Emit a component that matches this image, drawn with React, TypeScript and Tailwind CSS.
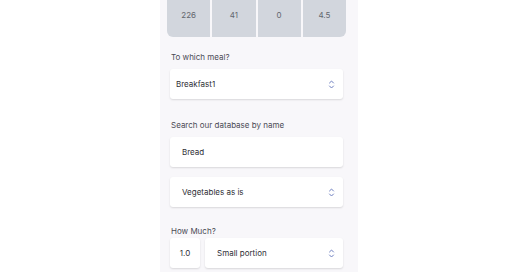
import { useState } from 'react';

const stats = ['226', '41', '0', '4.5'];

const Chevrons = () => (
  <svg width="7" height="11" viewBox="0 0 7 11" fill="none" className="shrink-0">
    <path d="M1.5 4 L3.5 2 L5.5 4" stroke="#6f80c0" strokeWidth="1" strokeLinecap="round" strokeLinejoin="round" />
    <path d="M1.5 7 L3.5 9 L5.5 7" stroke="#6f80c0" strokeWidth="1" strokeLinecap="round" strokeLinejoin="round" />
  </svg>
);

const Box = ({ children, className = '' }: { children: React.ReactNode; className?: string }) => (
  <div className={`flex h-[30px] items-center rounded-[3px] bg-white shadow-[0_1px_2px_rgba(0,0,0,0.13)] ${className}`}>
    {children}
  </div>
);

const Label = ({ text }: { text: string }) => (
  <div className="px-[1px] text-[8px] leading-none text-[#4b4b55]">{text}</div>
);

export default function App() {
  const [search] = useState('Bread');

  return (
    <div className="flex h-[272px] w-[518px] justify-center overflow-hidden bg-white font-['Inter',sans-serif]">
      <div className="flex w-[198px] flex-col bg-[#f8f7fa] pl-[10px] pr-[15px]">
        <div className="-mx-[3px] grid grid-cols-4 gap-[2px] overflow-hidden rounded-b-[6px]">
          {stats.map((s) => (
            <div key={s} className="flex h-[37px] items-center justify-center bg-[#d2d6dd] pb-[7px] text-[8px] text-[#63666e]">
              {s}
            </div>
          ))}
        </div>

        <div className="mt-[16px]">
          <Label text="To which meal?" />
        </div>
        <Box className="mt-[8px] justify-between pl-[6px] pr-[8px]">
          <span className="text-[8px] text-[#2f2f36]">Breakfast1</span>
          <Chevrons />
        </Box>

        <div className="mt-[22px]">
          <Label text="Search our database by name" />
        </div>
        <Box className="mt-[8px] pl-[12px]">
          <span className="text-[8px] text-[#2f2f36]">{search}</span>
        </Box>
        <Box className="mt-[10px] justify-between pl-[12px] pr-[8px]">
          <span className="text-[8px] text-[#2f2f36]">Vegetables as is</span>
          <Chevrons />
        </Box>

        <div className="mt-[20px]">
          <Label text="How Much?" />
        </div>
        <div className="mt-[3px] flex gap-[5px]">
          <Box className="w-[30px] shrink-0 justify-center">
            <span className="text-[8px] text-[#2f2f36]">1.0</span>
          </Box>
          <Box className="flex-1 justify-between pl-[12px] pr-[8px]">
            <span className="text-[8px] text-[#2f2f36]">Small portion</span>
            <Chevrons />
          </Box>
        </div>
      </div>
    </div>
  );
}
